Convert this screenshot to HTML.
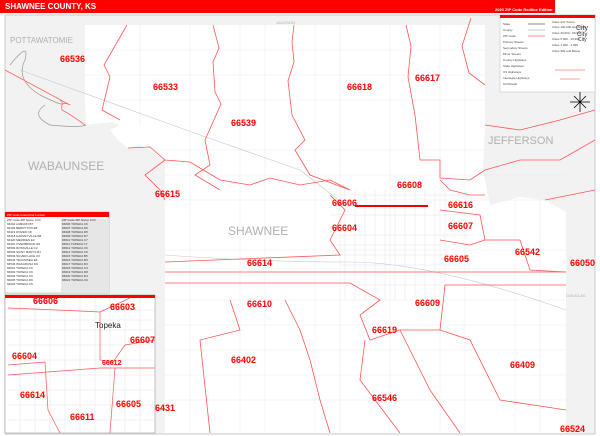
<!DOCTYPE html>
<html><head><meta charset="utf-8"><style>
html,body{margin:0;padding:0;width:600px;height:436px;overflow:hidden;background:#fff;font-family:"Liberation Sans",sans-serif}
.top{position:absolute;left:0;top:0;width:600px;height:13px;background:#f00}
.t1{position:absolute;left:5px;top:2px;color:#fff;font-weight:bold;font-size:8px}
.t2{position:absolute;left:495px;top:7px;color:#fff;font-weight:bold;font-size:4px}
.logo{position:absolute;left:555px;top:0;width:45px;height:14px;background:#fff}
svg{position:absolute;left:0;top:0}
.z{font-family:"Liberation Sans Narrow","Liberation Sans",sans-serif;font-weight:bold;font-size:9px;fill:#f00}
.c{font-family:"Liberation Sans",sans-serif;fill:#b0b0b0}
.lg{font-size:3px;fill:#444;font-family:"Liberation Sans",sans-serif}
</style></head><body>
<div class="top"></div>
<div class="t1">SHAWNEE COUNTY, KS</div>
<div class="t2">2023 ZIP Code Redline Edition</div>
<div class="logo"></div>
<svg width="600" height="436" viewBox="0 0 600 436">
<rect x="5" y="15" width="590" height="419" fill="#f2f2f2" stroke="#ccc" stroke-width="1"/>
<polygon points="85,25 485,25 485,125 483,170 490,205 520,197 545,200 566,212 566,433 165,433 165,160 140,145 128,148 118,140 110,130 120,125 112,122 86,125 85,100" fill="#fff"/>
<g stroke="#e9e9e9" stroke-width="0.5" fill="none">
<path d="M165,175H566M165,200H566M165,250H566M165,300H566M165,325H566M165,350H566M165,375H566M165,400H566M85,50H485M85,75H485M110,100H485M120,150H485"/>
<path d="M190,25V433M240,25V433M265,25V433M315,25V433M340,25V433M390,25V433M440,25V433M465,25V433M515,200V433M540,200V433M140,25V125"/>
</g>
<g stroke="#c8c8c8" stroke-width="0.6" fill="none">
<path d="M20,70 L200,135 L300,170 L345,205"/>
<path d="M165,255 Q260,262 350,262 Q430,262 566,310"/>
</g>
<g stroke="#ddd" stroke-width="0.4">
<path d="M330,195H470M330,215H470M330,235H470M330,245H470M335,255H465M340,265H460M345,285H440"/>
<path d="M345,190V300M355,190V300M365,190V300M375,190V300M385,190V300M395,190V300M405,190V300M415,190V300M425,190V300M435,190V300M445,190V300"/>
</g>
<path d="M10,65 Q30,40 25,60 Q15,80 40,95 Q70,110 60,100 M45,105 Q30,115 50,125 Q80,128 86,125" stroke="#999" stroke-width="0.7" fill="none"/>
<path d="M5,70 L70,105 Q60,100 62,110 Q70,114 85,125" stroke="#f66" stroke-width="0.8" fill="none"/>
<g stroke="#f55" stroke-width="0.8" fill="none">
<path d="M127,25 L104,65 L110,77 L102,110 L120,120"/>
<path d="M213,25 L219,48 L213,62 L215,92 L221,104 L205,140 L210,165 L195,175 L220,190"/>
<path d="M294,25 L292,42 L294,62 L288,81 L292,115 L305,140 L295,150 L310,175 L350,190"/>
<path d="M406,25 L411,46 L408,77 L415,115 L420,160 L440,160 L440,178 L470,180 L485,170"/>
<path d="M471,18 L462,46 L469,73 L485,85"/>
<path d="M128,148 L150,147 L165,160 L190,162 L220,180 L250,185 L270,178 L300,185 L330,180 L350,190"/>
<path d="M165,160 L145,175 L160,190 L165,200"/>
<path d="M330,195 L345,210 L330,240 L340,255 L165,262"/>
<path d="M165,272 L566,272"/>
<path d="M165,283 L350,283 L380,300 L360,315 L370,340 L400,330 L440,330 L445,285 L566,285"/>
<path d="M440,180 L450,190 L470,195 L485,195 M440,210 L480,215 L485,240 L470,245 L440,240"/>
<path d="M485,240 L520,240 L530,270 L566,272"/>
<path d="M230,300 L240,330 L200,340 L210,433"/>
<path d="M285,300 L300,330 L310,360 L320,400 L330,433"/>
<path d="M365,340 L360,380 L400,433"/>
<path d="M440,330 L470,340 L500,400 L566,410"/>
<path d="M400,330 L430,390 L460,433"/>
<path d="M485,125 L520,130 L560,120 L595,110"/>
<path d="M545,200 L595,190"/>
<path d="M485,170 L520,160 L560,160 L595,140"/>
</g>
<path d="M355,206 L428,206" stroke="#e00" stroke-width="2"/>
<text class="c" x="10" y="43" font-size="8">POTTAWATOMIE</text>
<text class="c" x="28" y="170" font-size="12">WABAUNSEE</text>
<text class="c" x="228" y="235" font-size="12">SHAWNEE</text>
<text class="c" x="488" y="144" font-size="11">JEFFERSON</text>
<text class="c" x="276" y="24" font-size="4">JACKSON</text>
<text class="c" x="566" y="297" font-size="4">DOUGLAS</text>
<g class="z">
<text x="60" y="62">66536</text><text x="153" y="90">66533</text><text x="347" y="90">66618</text>
<text x="415" y="81">66617</text><text x="231" y="126">66539</text><text x="155" y="197">66615</text>
<text x="397" y="188">66608</text><text x="332" y="206">66606</text><text x="448" y="208">66616</text>
<text x="332" y="231">66604</text><text x="448" y="229">66607</text><text x="515" y="255">66542</text>
<text x="570" y="266">66050</text><text x="247" y="266">66614</text><text x="444" y="262">66605</text>
<text x="247" y="307">66610</text><text x="415" y="306">66609</text><text x="372" y="333">66619</text>
<text x="231" y="363">66402</text><text x="510" y="368">66409</text><text x="372" y="401">66546</text>
<text x="560" y="432">66524</text><text x="155" y="411">6431</text>
</g>
<rect x="500" y="15" width="95" height="77" fill="#fff" stroke="#bbb" stroke-width="0.5"/>
<rect x="500" y="15" width="95" height="3" fill="#f00"/>
<g class="lg">
<text x="503" y="25">State</text><text x="503" y="31">County</text><text x="503" y="37">ZIP Code</text>
<text x="503" y="43">Primary Streets</text><text x="503" y="49">Secondary Streets</text><text x="503" y="55">Minor Streets</text>
<text x="503" y="61">County Highways</text><text x="503" y="67">State Highways</text><text x="503" y="73">US Highways</text>
<text x="503" y="79">Interstate Highways</text><text x="503" y="85">Toll Roads</text>
<text x="552" y="23">Cities and Towns</text><text x="552" y="28">Cities 100,000 and Above</text><text x="552" y="34">Cities 20,000 - 99,999</text>
<text x="552" y="40">Cities 5,000 - 19,999</text><text x="552" y="46">Cities 1,000 - 4,999</text><text x="552" y="52">Cities 999 and Below</text>
</g>
<text x="576" y="30" font-size="7" fill="#333">City</text><text x="577" y="36" font-size="6" fill="#333">City</text>
<text x="578" y="41" font-size="5" fill="#333">City</text>
<path d="M528,24H545" stroke="#888" stroke-width="1"/><path d="M528,30H545" stroke="#ccc" stroke-width="1"/>
<path d="M528,36H545" stroke="#f66" stroke-width="0.8"/>
<path d="M555,70H585M560,79H580" stroke="#f44" stroke-width="0.6"/>
<g stroke="#000" stroke-width="0.8"><path d="M580,92V112M570,102H590M574,96L586,108M586,96L574,108"/></g>
<rect x="5" y="212" width="104" height="81" fill="#fff" stroke="#999" stroke-width="0.5"/>
<rect x="61" y="219" width="48" height="74" fill="#e6e6e6"/>
<rect x="5" y="212" width="104" height="5" fill="#f00"/>
<text x="7" y="216" font-size="3" fill="#fff">ZIP Code Index/Grid Locator</text>
<g font-size="3" fill="#333" font-family="Liberation Sans">
<text x="7" y="221">ZIP Code  ZIP Name        LOC</text><text x="62" y="221">ZIP Code ZIP Name    LOC</text>
<text x="7" y="225">66402  AUBURN  B7</text><text x="62" y="225">66606  TOPEKA  C6</text>
<text x="7" y="229">66409  BERRYTON  E8</text><text x="62" y="229">66607  TOPEKA  D6</text>
<text x="7" y="233">66413  DOVER  C8</text><text x="62" y="233">66608  TOPEKA  D5</text>
<text x="7" y="237">66418  HARVEYVILLE  B8</text><text x="62" y="237">66609  TOPEKA  D7</text>
<text x="7" y="241">66420  MERIDEN  E3</text><text x="62" y="241">66610  TOPEKA  C7</text>
<text x="7" y="245">66431  OVERBROOK  E9</text><text x="62" y="245">66611  TOPEKA  C7</text>
<text x="7" y="249">66509  ROSSVILLE  C2</text><text x="62" y="249">66612  TOPEKA  C6</text>
<text x="7" y="253">66536  SAINT MARYS  B1</text><text x="62" y="253">66614  TOPEKA  C6</text>
<text x="7" y="257">66539  SILVER LAKE  C3</text><text x="62" y="257">66615  TOPEKA  B5</text>
<text x="7" y="261">66542  TECUMSEH  E6</text><text x="62" y="261">66616  TOPEKA  D5</text>
<text x="7" y="265">66546  WAKARUSA  D9</text><text x="62" y="265">66617  TOPEKA  D3</text>
<text x="7" y="269">66601  TOPEKA  C6</text><text x="62" y="269">66618  TOPEKA  C3</text>
<text x="7" y="273">66603  TOPEKA  C6</text><text x="62" y="273">66619  TOPEKA  D8</text>
<text x="7" y="277">66604  TOPEKA  C6</text><text x="62" y="277">66620  TOPEKA  D4</text>
<text x="7" y="281">66605  TOPEKA  D6</text><text x="62" y="281">66621  TOPEKA  C6</text>
<text x="7" y="285">66606  TOPEKA  C5</text>
</g>
<rect x="5" y="295" width="150" height="138" fill="#fff" stroke="#999" stroke-width="0.6"/>
<rect x="5" y="295" width="150" height="3" fill="#f00"/>
<g stroke="#e4e4e4" stroke-width="0.5">
<path d="M8,310H155M8,320H155M8,330H155M8,345H155M8,360H155M8,375H155M8,390H155M8,405H155M8,420H155"/>
<path d="M20,298V433M35,298V433M50,298V433M65,298V433M80,298V433M95,298V433M110,298V433M125,298V433M140,298V433"/>
</g>
<g stroke="#f55" stroke-width="0.7" fill="none">
<path d="M8,308 Q60,310 100,312 L130,298 M100,312 L100,360 L113,362 L125,345 L155,340 M8,365 L45,362 L48,410 L60,433 M8,375 L100,368 L155,368 M115,368 L110,433"/>
</g>
<text x="95" y="328" font-size="8" fill="#222">Topeka</text>
<g class="z">
<text x="33" y="304">66606</text><text x="110" y="310">66603</text><text x="130" y="343">66607</text>
<text x="12" y="359">66604</text><text x="102" y="365" font-size="7">66612</text><text x="20" y="398">66614</text>
<text x="116" y="407">66605</text><text x="70" y="420">66611</text>
</g>
</svg>
</body></html>
